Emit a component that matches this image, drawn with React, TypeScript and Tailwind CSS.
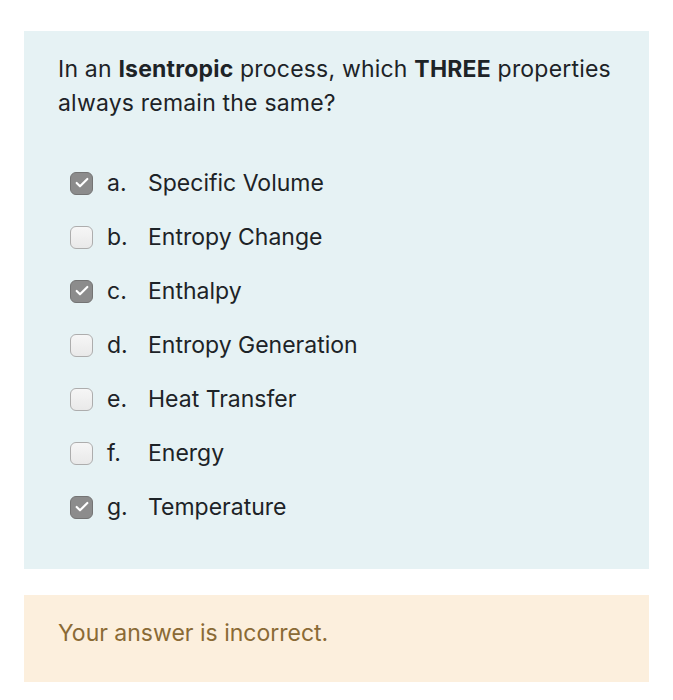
import { Check } from "lucide-react";

type Option = { letter: string; label: string; checked: boolean };

const options: Option[] = [
  { letter: "a.", label: "Specific Volume", checked: true },
  { letter: "b.", label: "Entropy Change", checked: false },
  { letter: "c.", label: "Enthalpy", checked: true },
  { letter: "d.", label: "Entropy Generation", checked: false },
  { letter: "e.", label: "Heat Transfer", checked: false },
  { letter: "f.", label: "Energy", checked: false },
  { letter: "g.", label: "Temperature", checked: true },
];

function Box({ checked }: { checked: boolean }) {
  if (checked) {
    return (
      <div className="size-[23px] shrink-0 rounded-[6px] border border-[#747474] bg-[#8c8c8c] grid place-items-center">
        <Check className="size-[16px] text-white" strokeWidth={3.2} aria-hidden="true" />
      </div>
    );
  }
  return <div className="size-[23px] shrink-0 rounded-[6px] border border-[#adadad] bg-gradient-to-b from-[#f6f6f6] to-[#e9e9e9]" />;
}

export default function App() {
  return (
    <div className="min-h-[700px] bg-white pt-[31px] px-[24px] font-['Inter',sans-serif] text-[#1d2327]">
      <div className="bg-[#e6f2f4] pl-[34px] pr-[30px] pt-[21px] pb-[35px]">
        <p className="text-[23px] leading-[34px] tracking-[0.2px]">
          In an <b className="font-bold">Isentropic</b> process, which <b className="font-bold">THREE</b> properties
          always remain the same?
        </p>
        <div className="mt-[36px] flex flex-col">
          {options.map((o) => (
            <div key={o.letter} className="h-[54px] flex items-center">
              <div className="ml-[12px]">
                <Box checked={o.checked} />
              </div>
              <span className="ml-[14px] w-[41px] text-[23px]">{o.letter}</span>
              <span className="text-[23px]">{o.label}</span>
            </div>
          ))}
        </div>
      </div>
      <div className="mt-[26px] bg-[#fcefdd] pl-[34px] pt-[23px] pb-[34px]">
        <p className="text-[23px] leading-[30px] text-[#8a6a35]">Your answer is incorrect.</p>
      </div>
    </div>
  );
}
